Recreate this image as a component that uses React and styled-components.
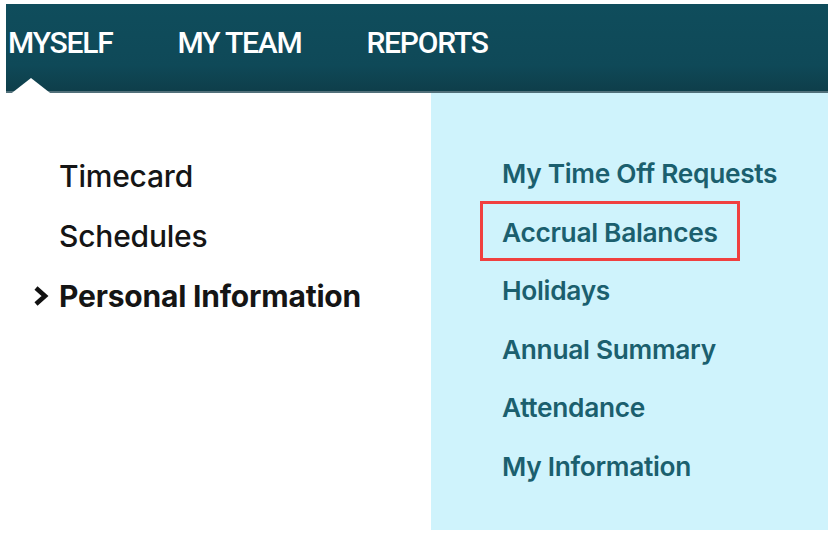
import React from 'react';
import styled, { createGlobalStyle } from 'styled-components';

const GlobalStyle = createGlobalStyle`
    html, body {
        margin: 0;
        padding: 0;
        background: #ffffff;
    }
    body {
        font-family: Inter, "Open Sans", Arial, sans-serif;
        width: 830px;
        height: 534px;
        overflow: hidden;
    }
`;

const Page = styled.div`
    display: flex;
    flex-direction: column;
    height: 534px;
    padding: 4px 2px 0 6px;
    box-sizing: border-box;
`;

const Header = styled.nav`
    position: relative;
    display: flex;
    align-items: flex-start;
    gap: 65px;
    height: 89px;
    padding: 22px 0 0 2px;
    box-sizing: border-box;
    background: linear-gradient(180deg, #0f4d5c 0%, #0f4958 70%, #0e3e4a 100%);
    border-bottom: 2px solid #51707a;
`;

const Tab = styled.span`
    font-family: Roboto, Arial, sans-serif;
    font-size: 30px;
    font-weight: 500;
    letter-spacing: -1.2px;
    color: #ffffff;
    line-height: 34px;
    position: relative;

    ${({ $active }) => $active && `
        &::after {
            content: '';
            position: absolute;
            left: 0;
            top: 52px;
            width: 0;
            height: 0;
            border-left: 23px solid transparent;
            border-right: 23px solid transparent;
            border-bottom: 18px solid #ffffff;
        }
    `}
`;

const Body = styled.div`
    display: flex;
    flex: 1;
`;

const LeftMenu = styled.ul`
    list-style: none;
    margin: 0;
    padding: 66px 0 0 0;
    width: 425px;
    display: flex;
    flex-direction: column;
    gap: 25px;
`;

const LeftItem = styled.li`
    position: relative;
    padding-left: 53px;
    font-size: 30px;
    line-height: 35px;
    color: #151515;
    letter-spacing: -0.2px;
    font-weight: ${({ $current }) => ($current ? 700 : 500)};
`;

const Chevron = styled.svg`
    position: absolute;
    left: 25px;
    top: 6px;
`;

const SubPanel = styled.ul`
    list-style: none;
    margin: 0 0 4px 0;
    padding: 63px 0 0 71px;
    flex: 1;
    background: #cff3fc;
    display: flex;
    flex-direction: column;
    gap: 23.5px;
`;

const SubItem = styled.li`
    position: relative;
    font-size: 26.3px;
    font-weight: 600;
    line-height: 35px;
    color: #1b5f6e;
    letter-spacing: -0.3px;

    ${({ $highlight }) => $highlight && `
        &::before {
            content: '';
            position: absolute;
            left: -22px;
            top: -14px;
            width: 254px;
            height: 54px;
            border: 3px solid #f0403f;
        }
    `}
`;

const tabs = ['MYSELF', 'MY TEAM', 'REPORTS'];
const leftItems = ['Timecard', 'Schedules', 'Personal Information'];
const subItems = [
    'My Time Off Requests',
    'Accrual Balances',
    'Holidays',
    'Annual Summary',
    'Attendance',
    'My Information',
];

const App = () => {
    return (
        <Page>
            <GlobalStyle />
            <Header>
                {tabs.map((t, i) => (
                    <Tab key={t} $active={i === 0}>{t}</Tab>
                ))}
            </Header>
            <Body>
                <LeftMenu>
                    {leftItems.map((item, i) => {
                        const current = i === leftItems.length - 1;
                        return (
                            <LeftItem key={item} $current={current}>
                                {current && (
                                    <Chevron width="18" height="22" viewBox="0 0 18 22">
                                        <path d="M5 3 L14 11 L5 19" fill="none" stroke="#111" strokeWidth="4.6" />
                                    </Chevron>
                                )}
                                {item}
                            </LeftItem>
                        );
                    })}
                </LeftMenu>
                <SubPanel>
                    {subItems.map((item) => (
                        <SubItem key={item} $highlight={item === 'Accrual Balances'}>{item}</SubItem>
                    ))}
                </SubPanel>
            </Body>
        </Page>
    );
};

export default App;
